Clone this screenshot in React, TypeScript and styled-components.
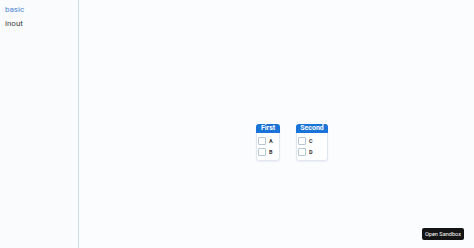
import React from 'react'
import styled, { createGlobalStyle } from 'styled-components'

const Global = createGlobalStyle`
    html, body, #root { margin: 0; padding: 0; height: 100%; }
    body {
        font-family: Roboto, "Liberation Sans", sans-serif;
        background: #fbfcfe;
    }
`;

const Layout = styled.div`
    display: flex;
    height: 248px;
`;

const Sidebar = styled.nav`
    width: 79px;
    border-right: 1px solid #c9dcf2;
    background: #fafbfd;
    padding-top: 5px;
    box-sizing: border-box;
    display: flex;
    flex-direction: column;
    gap: 4px;
`;

const NavItem = styled.div<{ $active?: boolean }>`
    font-size: 8px;
    line-height: 10px;
    padding-left: 5px;
    color: ${p => (p.$active ? '#4a86d6' : '#444')};
`;

const Main = styled.main`
    flex: 1;
    display: flex;
    align-items: flex-start;
    gap: 16px;
    padding: 124px 0 0 177px;
`;

const Card = styled.div<{ $w: number }>`
    width: ${p => p.$w}px;
    border: 1px solid #dfe6ef;
    border-radius: 3px;
    background: #fff;
    padding: 2px 0 3px;
    box-shadow: 0 1px 2px rgba(0, 0, 0, 0.06);
`;

const CardHead = styled.div`
    background: #1a73d6;
    color: #fff;
    font-size: 7px;
    font-weight: 700;
    text-align: center;
    height: 9px;
    line-height: 9px;
    border-radius: 3px 3px 0 0;
    margin: -3px -1px 2px;
`;

const Row = styled.label`
    display: flex;
    align-items: center;
    gap: 3px;
    height: 11px;
    padding-left: 1px;
    font-size: 5.5px;
    font-weight: 700;
    color: #333;
`;

const Box = styled.span`
    width: 6px;
    height: 6px;
    border: 1px solid #b9c6d6;
    border-radius: 1px;
    background: #fff;
`;

const SandboxBtn = styled.button`
    position: fixed;
    right: 10px;
    bottom: 8px;
    background: #141414;
    color: #fff;
    border: none;
    border-radius: 2px;
    font-family: Roboto, "Liberation Sans", sans-serif;
    font-size: 5.6px;
    height: 12px;
    padding: 0 3px;
`;

const lists = [
    { title: 'First', w: 22, items: ['A', 'B'] },
    { title: 'Second', w: 30, items: ['C', 'D'] },
];

const App: React.FC = () => {
  return (
    <>
        <Global />
        <Layout>
            <Sidebar>
                <NavItem $active>basic</NavItem>
                <NavItem>inout</NavItem>
            </Sidebar>
            <Main>
                {lists.map(list => (
                    <Card key={list.title} $w={list.w}>
                        <CardHead>{list.title}</CardHead>
                        {list.items.map(item => (
                            <Row key={item}>
                                <Box />
                                {item}
                            </Row>
                        ))}
                    </Card>
                ))}
            </Main>
        </Layout>
        <SandboxBtn>Open Sandbox</SandboxBtn>
    </>
  )
}

export default App
